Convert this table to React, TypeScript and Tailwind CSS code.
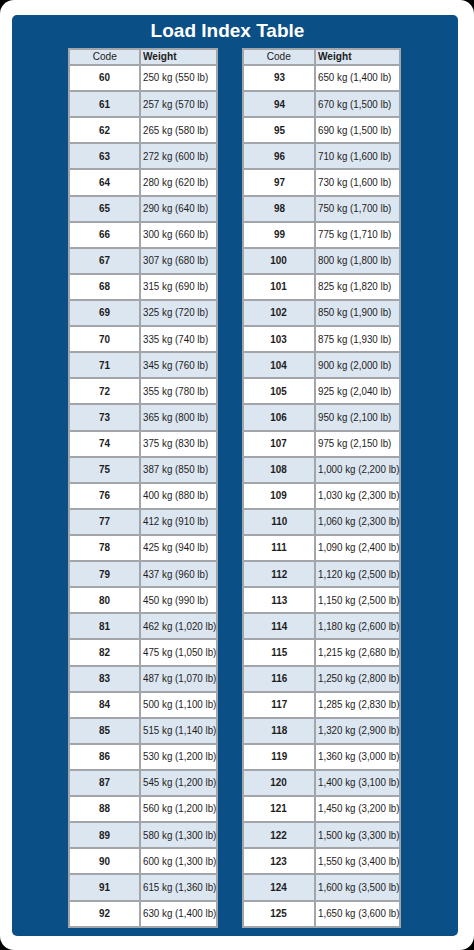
const left: [number, string][] = [
  [60, "250 kg (550 lb)"],
  [61, "257 kg (570 lb)"],
  [62, "265 kg (580 lb)"],
  [63, "272 kg (600 lb)"],
  [64, "280 kg (620 lb)"],
  [65, "290 kg (640 lb)"],
  [66, "300 kg (660 lb)"],
  [67, "307 kg (680 lb)"],
  [68, "315 kg (690 lb)"],
  [69, "325 kg (720 lb)"],
  [70, "335 kg (740 lb)"],
  [71, "345 kg (760 lb)"],
  [72, "355 kg (780 lb)"],
  [73, "365 kg (800 lb)"],
  [74, "375 kg (830 lb)"],
  [75, "387 kg (850 lb)"],
  [76, "400 kg (880 lb)"],
  [77, "412 kg (910 lb)"],
  [78, "425 kg (940 lb)"],
  [79, "437 kg (960 lb)"],
  [80, "450 kg (990 lb)"],
  [81, "462 kg (1,020 lb)"],
  [82, "475 kg (1,050 lb)"],
  [83, "487 kg (1,070 lb)"],
  [84, "500 kg (1,100 lb)"],
  [85, "515 kg (1,140 lb)"],
  [86, "530 kg (1,200 lb)"],
  [87, "545 kg (1,200 lb)"],
  [88, "560 kg (1,200 lb)"],
  [89, "580 kg (1,300 lb)"],
  [90, "600 kg (1,300 lb)"],
  [91, "615 kg (1,360 lb)"],
  [92, "630 kg (1,400 lb)"],
];

const right: [number, string][] = [
  [93, "650 kg (1,400 lb)"],
  [94, "670 kg (1,500 lb)"],
  [95, "690 kg (1,500 lb)"],
  [96, "710 kg (1,600 lb)"],
  [97, "730 kg (1,600 lb)"],
  [98, "750 kg (1,700 lb)"],
  [99, "775 kg (1,710 lb)"],
  [100, "800 kg (1,800 lb)"],
  [101, "825 kg (1,820 lb)"],
  [102, "850 kg (1,900 lb)"],
  [103, "875 kg (1,930 lb)"],
  [104, "900 kg (2,000 lb)"],
  [105, "925 kg (2,040 lb)"],
  [106, "950 kg (2,100 lb)"],
  [107, "975 kg (2,150 lb)"],
  [108, "1,000 kg (2,200 lb)"],
  [109, "1,030 kg (2,300 lb)"],
  [110, "1,060 kg (2,300 lb)"],
  [111, "1,090 kg (2,400 lb)"],
  [112, "1,120 kg (2,500 lb)"],
  [113, "1,150 kg (2,500 lb)"],
  [114, "1,180 kg (2,600 lb)"],
  [115, "1,215 kg (2,680 lb)"],
  [116, "1,250 kg (2,800 lb)"],
  [117, "1,285 kg (2,830 lb)"],
  [118, "1,320 kg (2,900 lb)"],
  [119, "1,360 kg (3,000 lb)"],
  [120, "1,400 kg (3,100 lb)"],
  [121, "1,450 kg (3,200 lb)"],
  [122, "1,500 kg (3,300 lb)"],
  [123, "1,550 kg (3,400 lb)"],
  [124, "1,600 kg (3,500 lb)"],
  [125, "1,650 kg (3,600 lb)"],
];

// the source image is squeezed sideways, so text is drawn taller and narrowed
function LoadTable({
  rows,
  codeWidth,
  width,
}: {
  rows: [number, string][];
  codeWidth: string;
  width: string;
}) {
  return (
    <table
      className={`${width} table-fixed border-collapse border-2 border-[#a2a6aa] text-[11.5px] text-[#1c1c1c]`}
    >
      <colgroup>
        <col className={codeWidth} />
        <col />
      </colgroup>
      <thead>
        <tr className="h-[16px] bg-[#dce6f1] leading-none">
          <th className="border-2 border-[#a2a6aa] p-0 text-center font-normal">
            <span className="inline-block scale-x-[0.88]">Code</span>
          </th>
          <th className="border-2 border-[#a2a6aa] p-0 pl-[2px] text-left font-semibold">
            <span className="inline-block origin-left scale-x-[0.88]">Weight</span>
          </th>
        </tr>
      </thead>
      <tbody>
        {rows.map(([code, weight], i) => (
          <tr key={code} className={`h-[26.12px] ${i % 2 ? "bg-[#dce6f1]" : "bg-white"}`}>
            <td className="border-2 border-[#a2a6aa] p-0 text-center font-bold">
              <span className="inline-block scale-x-[0.86]">{code}</span>
            </td>
            <td className="whitespace-nowrap border-2 border-[#a2a6aa] p-0 pl-[2px]">
              <span className="inline-block origin-left scale-x-[0.85]">{weight}</span>
            </td>
          </tr>
        ))}
      </tbody>
    </table>
  );
}

export default function App() {
  return (
    <div className="h-[950px] w-[474px] bg-black font-['Liberation_Sans',Arial,sans-serif]">
      <div className="h-full w-full overflow-hidden rounded-[14px] bg-white pl-[12px] pt-[15px]">
        <div className="flex h-[921px] w-[446px] flex-col rounded-[5px] bg-[#0b4f87]">
          <div className="flex h-[33px] items-center justify-center pr-[15px] text-[19px] font-bold text-white">
            Load Index Table
          </div>
          <div className="flex gap-[24px] pl-[56px]">
            <LoadTable rows={left} codeWidth="w-[71px]" width="w-[150px]" />
            <LoadTable rows={right} codeWidth="w-[72px]" width="w-[159px]" />
          </div>
        </div>
      </div>
    </div>
  );
}
